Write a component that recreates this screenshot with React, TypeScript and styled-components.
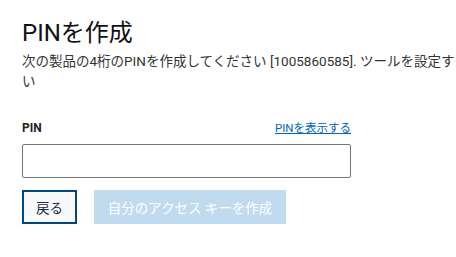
import styled, { createGlobalStyle } from 'styled-components'

const GlobalStyle = createGlobalStyle`
  body {
    margin: 0;
    background: #ffffff;
    font-family: Roboto, "Noto Sans CJK JP", sans-serif;
    color: #1a1a1a;
  }
`

const Page = styled.div`
  padding: 18px 0 0 22px;
  display: flex;
  flex-direction: column;
`

const Title = styled.h1`
  margin: 0;
  font-size: 24px;
  font-weight: 400;
  line-height: 30px;
  color: #111111;
`

const Description = styled.p`
  margin: 3px 0 0;
  font-size: 13.5px;
  line-height: 20px;
  color: #333333;
`

const Form = styled.div`
  width: 329px;
  margin-top: 26px;
  display: flex;
  flex-direction: column;
`

const LabelRow = styled.div`
  display: flex;
  justify-content: space-between;
  align-items: flex-end;
  height: 18px;
`

const Label = styled.label`
  font-size: 12px;
  font-weight: 700;
  color: #222222;
`

const ShowLink = styled.a`
  font-size: 11.5px;
  color: #0067b8;
  text-decoration: underline;
  cursor: pointer;
`

const PinInput = styled.input`
  box-sizing: border-box;
  margin-top: 9px;
  width: 100%;
  height: 34px;
  border: 1px solid #767676;
  border-radius: 2px;
  padding: 0 8px;
  font-size: 14px;
  font-family: inherit;
  outline: none;
`

const Actions = styled.div`
  display: flex;
  gap: 17px;
  margin-top: 12px;
`

const Button = styled.button<{ $primary?: boolean }>`
  box-sizing: border-box;
  width: ${p => (p.$primary ? '192px' : '55px')};
  height: 34px;
  padding: 0;
  font-family: inherit;
  font-size: 13.5px;
  border-radius: 0;
  border: ${p => (p.$primary ? 'none' : '2px solid #00467f')};
  background: ${p => (p.$primary ? '#c0daf0' : '#f7f9fb')};
  color: ${p => (p.$primary ? '#ffffff' : '#1a2a3a')};
  cursor: ${p => (p.$primary ? 'default' : 'pointer')};
`

export default function App() {
  return (
    <>
      <GlobalStyle />
      <Page>
        <Title>PINを作成</Title>
        <Description>
          次の製品の4桁のPINを作成してください [1005860585]. ツールを設定すい
        </Description>
        <Form>
          <LabelRow>
            <Label htmlFor="pin">PIN</Label>
            <ShowLink>PINを表示する</ShowLink>
          </LabelRow>
          <PinInput id="pin" type="password" />
          <Actions>
            <Button>戻る</Button>
            <Button $primary disabled>自分のアクセス キーを作成</Button>
          </Actions>
        </Form>
      </Page>
    </>
  )
}
